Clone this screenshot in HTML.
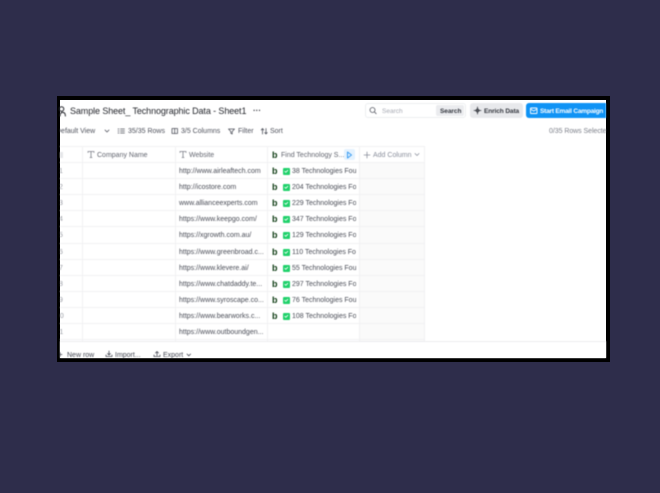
<!DOCTYPE html>
<html><head><meta charset="utf-8"><style>
html,body{margin:0;padding:0;width:660px;height:493px;overflow:hidden;background:#2e2d4b}
*{box-sizing:border-box}
#f{position:absolute;left:57px;top:96px;width:553px;height:266px;background:#000}
#w{position:absolute;left:60px;top:100px;width:546px;height:258px;background:#fff;overflow:hidden}
#p{position:absolute;left:0;top:0;width:660px;height:493px;font-family:"Liberation Sans",sans-serif;filter:blur(.45px)}
.t{position:absolute;white-space:nowrap;line-height:10px;font-size:7px;color:#4a4d57;letter-spacing:0}
.l{position:absolute;background:#f1f1f3}
.b{position:absolute;font-family:"Liberation Sans",sans-serif;font-weight:700;font-size:9px;line-height:10px;color:#0d3b12}
.c{position:absolute;width:6.5px;height:6.5px;background:#1fd16a;border-radius:1px}
.i{position:absolute;left:0;top:0}
</style></head><body>
<div id="f"></div>
<div id="w"></div>
<div id="p">
<div style="position:absolute;left:60px;top:100px;width:546px;height:258px;overflow:hidden">
<div style="position:absolute;left:299px;top:62px;width:65px;height:179px;background:#fafafa"></div>
<div style="position:absolute;left:0;top:241px;width:546px;height:17px;background:#fff"></div>
<div class="t" style="left:10px;top:6px;font-size:9px;color:#23252b;letter-spacing:-.1px">Sample Sheet_ Technographic Data - Sheet1</div>
<div class="t" style="left:193px;top:6px;font-size:8px;color:#33353c;font-weight:700">···</div>
<div class="t" style="left:-4px;top:27px;color:#4f525c">Default View</div>
<div class="t" style="left:68px;top:27px;color:#4f525c">35/35 Rows</div>
<div class="t" style="left:121px;top:27px;color:#4f525c">3/5 Columns</div>
<div class="t" style="left:178px;top:27px;color:#4f525c">Filter</div>
<div class="t" style="left:210px;top:27px;color:#4f525c">Sort</div>
<div class="t" style="left:489px;top:27px;color:#7d808a;letter-spacing:-.05px">0/35 Rows Selected</div>
<div class="t" style="left:37px;top:51px;color:#62656f">Company Name</div>
<div class="t" style="left:129px;top:51px;color:#62656f">Website</div>
<div class="t" style="left:221px;top:51px;color:#62656f">Find Technology S...</div>
<div class="t" style="left:313px;top:51px;color:#8a8f9c">Add Column</div>
</div>

<!-- top right controls -->
<div style="position:absolute;left:365px;top:103px;width:101px;height:15px;border:1px solid #eceef0;border-radius:3px;background:#fff"></div>
<div class="t" style="left:382px;top:107px;font-size:6.5px;color:#a6a9b2">Search</div>
<div style="position:absolute;left:436px;top:105px;width:28px;height:11px;background:#ebecef;border-radius:2px"></div>
<div class="t" style="left:440px;top:107px;font-size:6.5px;color:#33363e;font-weight:700;letter-spacing:-.05px">Search</div>
<div style="position:absolute;left:470px;top:103px;width:53px;height:15px;background:#e8e9ec;border-radius:3px"></div>
<div class="t" style="left:484px;top:107px;font-size:6.5px;color:#33363e;font-weight:700;letter-spacing:-.1px">Enrich Data</div>
<div style="position:absolute;left:526px;top:103px;width:80px;height:15px;background:#0f93f5;border-radius:3px 0 0 3px"></div>
<div class="t" style="left:540px;top:107px;font-size:6.5px;color:#fff;font-weight:700;letter-spacing:-.2px">Start Email Campaign</div>

<!-- grid lines -->
<div class="l" style="left:60px;top:146px;width:364px;height:1px"></div>
<div class="l" style="left:60px;top:162px;width:364px;height:1px"></div>
<div class="l" style="left:60px;top:178px;width:364px;height:1px"></div>
<div class="l" style="left:60px;top:194px;width:364px;height:1px"></div>
<div class="l" style="left:60px;top:210px;width:364px;height:1px"></div>
<div class="l" style="left:60px;top:226px;width:364px;height:1px"></div>
<div class="l" style="left:60px;top:243px;width:364px;height:1px"></div>
<div class="l" style="left:60px;top:259px;width:364px;height:1px"></div>
<div class="l" style="left:60px;top:275px;width:364px;height:1px"></div>
<div class="l" style="left:60px;top:291px;width:364px;height:1px"></div>
<div class="l" style="left:60px;top:307px;width:364px;height:1px"></div>
<div class="l" style="left:60px;top:323px;width:364px;height:1px"></div>
<div class="l" style="left:60px;top:339px;width:364px;height:1px"></div>
<div class="l" style="left:60px;top:341px;width:546px;height:1px;background:#ececee"></div>
<div class="l" style="left:82px;top:146px;width:1px;height:195px"></div>
<div class="l" style="left:175px;top:146px;width:1px;height:195px"></div>
<div class="l" style="left:267px;top:146px;width:1px;height:195px"></div>
<div class="l" style="left:359px;top:146px;width:1px;height:195px"></div>
<div class="l" style="left:424px;top:146px;width:1px;height:195px"></div>

<!-- row numbers, clipped at frame -->
<div style="position:absolute;left:60px;top:146px;width:20px;height:195px;overflow:hidden">
<div class="t" style="left:-1px;top:21px;color:#9a9da5">1</div>
<div class="t" style="left:-1px;top:37px;color:#9a9da5">2</div>
<div class="t" style="left:-1px;top:53px;color:#9a9da5">3</div>
<div class="t" style="left:-1px;top:69px;color:#9a9da5">4</div>
<div class="t" style="left:-1px;top:85px;color:#9a9da5">5</div>
<div class="t" style="left:-1px;top:102px;color:#9a9da5">6</div>
<div class="t" style="left:-1px;top:118px;color:#9a9da5">7</div>
<div class="t" style="left:-1px;top:134px;color:#9a9da5">8</div>
<div class="t" style="left:-1px;top:150px;color:#9a9da5">9</div>
<div class="t" style="left:-4px;top:166px;color:#9a9da5">10</div>
<div class="t" style="left:-4px;top:182px;color:#9a9da5">11</div>
</div>

<!-- websites -->
<div class="t" style="left:179px;top:167px">http://www.airleaftech.com</div>
<div class="t" style="left:179px;top:183px">http://icostore.com</div>
<div class="t" style="left:179px;top:199px">www.allianceexperts.com</div>
<div class="t" style="left:179px;top:215px">https://www.keepgo.com/</div>
<div class="t" style="left:179px;top:231px">https://xgrowth.com.au/</div>
<div class="t" style="left:179px;top:248px">https://www.greenbroad.c...</div>
<div class="t" style="left:179px;top:264px">https://www.klevere.ai/</div>
<div class="t" style="left:179px;top:280px">https://www.chatdaddy.te...</div>
<div class="t" style="left:179px;top:296px">https://www.syroscape.co...</div>
<div class="t" style="left:179px;top:312px">https://www.bearworks.c...</div>
<div class="t" style="left:179px;top:328px">https://www.outboundgen...</div>

<!-- results -->
<div style="position:absolute;left:268px;top:163px;width:88px;height:160px;overflow:hidden">
<div class="b" style="left:4px;top:3px">b</div><div class="c" style="left:15px;top:5px"></div><div class="t" style="left:24px;top:4px">38 Technologies Found</div>
<div class="b" style="left:4px;top:19px">b</div><div class="c" style="left:15px;top:21px"></div><div class="t" style="left:24px;top:20px">204 Technologies Found</div>
<div class="b" style="left:4px;top:35px">b</div><div class="c" style="left:15px;top:37px"></div><div class="t" style="left:24px;top:36px">229 Technologies Found</div>
<div class="b" style="left:4px;top:51px">b</div><div class="c" style="left:15px;top:53px"></div><div class="t" style="left:24px;top:52px">347 Technologies Found</div>
<div class="b" style="left:4px;top:67px">b</div><div class="c" style="left:15px;top:69px"></div><div class="t" style="left:24px;top:68px">129 Technologies Found</div>
<div class="b" style="left:4px;top:84px">b</div><div class="c" style="left:15px;top:86px"></div><div class="t" style="left:24px;top:85px">110 Technologies Found</div>
<div class="b" style="left:4px;top:100px">b</div><div class="c" style="left:15px;top:102px"></div><div class="t" style="left:24px;top:101px">55 Technologies Found</div>
<div class="b" style="left:4px;top:116px">b</div><div class="c" style="left:15px;top:118px"></div><div class="t" style="left:24px;top:117px">297 Technologies Found</div>
<div class="b" style="left:4px;top:132px">b</div><div class="c" style="left:15px;top:134px"></div><div class="t" style="left:24px;top:133px">76 Technologies Found</div>
<div class="b" style="left:4px;top:148px">b</div><div class="c" style="left:15px;top:150px"></div><div class="t" style="left:24px;top:149px">108 Technologies Found</div>
</div>
<div class="b" style="left:272px;top:150px">b</div>
<div style="position:absolute;left:344px;top:149px;width:11px;height:11px;background:#e4f2fe;border-radius:2px"></div>

<!-- footer -->
<div class="t" style="left:67px;top:351px;color:#454853">New row</div>
<div class="t" style="left:115px;top:351px;color:#454853">Import...</div>
<div class="t" style="left:163px;top:351px;color:#454853">Export</div>

<!-- icons -->
<svg class="i" width="660" height="493" viewBox="0 0 660 493" fill="none" stroke-linecap="round" stroke-linejoin="round">
<g stroke="#23252b" stroke-width="1"><circle cx="61.5" cy="109" r="2.300"/><path d="M60 116c0-2.500 1-3.600 2.600-3.600s2.800 1.100 2.800 3.600"/></g>
<g stroke="#4f525c" stroke-width=".8">
<path d="M105 130l2 2 2-2"/>
<path d="M118 129h1M118 131h1M118 133h1M120.500 129h4M120.500 131h4M120.500 133h4"/>
<rect x="172" y="128.500" width="5.500" height="5"/><path d="M174.700 128.500v5"/>
<path d="M228.500 129h6l-2.300 2.500v2.500l-1.400-.8v-1.700z"/>
<path d="M262.500 134v-5.500l-1.300 1.500M262.500 128.500l1.300 1.500M266 128.500v5.500l-1.300-1.500M266 134l1.300-1.500"/>
</g>
<g stroke="#7b7e88" stroke-width=".8">
<path d="M88 152.500v-1h6v1M91 151.500v6M90 157.500h2"/>
<path d="M180 152.500v-1h6v1M183 151.500v6M182 157.500h2"/>
</g>
<rect x="60" y="152" width="3" height="6" fill="#e6e7ea"/>
<path d="M347.500 152v6l4-3z" stroke="#3a9cf2" stroke-width="1"/>
<path d="M367 152v6M364 155h6" stroke="#8a8f9c" stroke-width=".8"/>
<path d="M415 153.500l2 2 2-2" stroke="#8a8f9c" stroke-width=".8"/>
<g stroke="#555862" stroke-width=".8"><circle cx="372.500" cy="110" r="2.500"/><path d="M374.500 112l1.700 1.700"/></g>
<path d="M477.500 107v7M474 110.500h7M477.500 108.500l-1 1-1 1 1 1 1 1 1-1 1-1-1-1z" stroke="#33363e" stroke-width=".8"/>
<g stroke="#fff" stroke-width=".9"><rect x="530.500" y="108" width="6.500" height="5.500" rx=".5"/><path d="M530.500 109l3.200 2 3.300-2"/></g>
<g stroke="#454853" stroke-width=".8">
<path d="M60 352.500v4M60 354.500h2"/>
<path d="M109 351v4M107.500 353.500l1.500 1.500 1.500-1.500M106 355v1.500h6V355"/>
<path d="M157 355.500v-4M155.500 353l1.500-1.500 1.500 1.500M154 355v1.500h6V355"/>
<path d="M187 354l1.800 1.800 1.800-1.800"/>
</g>
</svg>
<svg class="i" width="660" height="493" viewBox="0 0 660 493" fill="none" stroke="#fff" stroke-width=".8" stroke-linecap="round" stroke-linejoin="round">
<path d="M284.800 171.300l1 1 2-2"/><path d="M284.800 187.300l1 1 2-2"/><path d="M284.800 203.300l1 1 2-2"/><path d="M284.800 219.300l1 1 2-2"/><path d="M284.800 235.300l1 1 2-2"/><path d="M284.800 252.300l1 1 2-2"/><path d="M284.800 268.300l1 1 2-2"/><path d="M284.800 284.300l1 1 2-2"/><path d="M284.800 300.300l1 1 2-2"/><path d="M284.800 316.300l1 1 2-2"/>
</svg>
</div>
</body></html>
